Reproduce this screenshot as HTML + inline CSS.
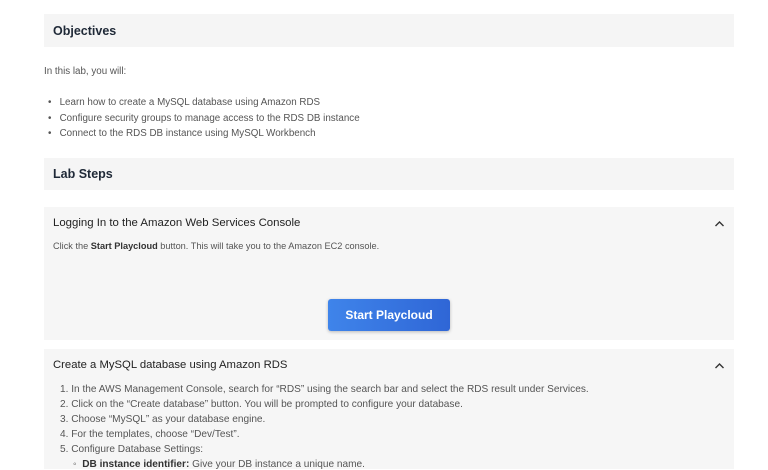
<!DOCTYPE html>
<html><head><style>
body{margin:0;width:768px;height:469px;overflow:hidden;background:#fff;font-family:"Liberation Sans",sans-serif;position:relative}
.a{position:absolute;white-space:nowrap}
.hdr{position:absolute;left:44px;width:690px;background:#f5f5f5}
.h{font-weight:bold;font-size:12.5px;color:#1f2937}
.t{font-size:9.8px;color:#555}
.p{font-size:10.1px;color:#555}
</style></head><body>
<div class="hdr" style="top:14px;height:33px"></div>
<div class="a h" style="left:53px;top:24px">Objectives</div>
<div class="a t" style="left:44px;top:66px">In this lab, you will:</div>
<div class="a t" style="left:48px;top:97px">•&nbsp;&nbsp;&nbsp;Learn how to create a MySQL database using Amazon RDS</div>
<div class="a t" style="left:48px;top:113px">•&nbsp;&nbsp;&nbsp;Configure security groups to manage access to the RDS DB instance</div>
<div class="a t" style="left:48px;top:128px">•&nbsp;&nbsp;&nbsp;Connect to the RDS DB instance using MySQL Workbench</div>
<div class="hdr" style="top:158px;height:32px"></div>
<div class="a h" style="left:53px;top:167px">Lab Steps</div>
<div class="hdr" style="top:207px;height:133px;background:#f6f6f6"></div>
<div class="a" style="left:53px;top:217px;font-size:11.4px;color:#222">Logging In to the Amazon Web Services Console</div>
<svg class="a" style="left:714px;top:220px" width="11" height="8"><path d="M1.5 6 L5.5 2 L9.5 6" stroke="#333" stroke-width="1.4" fill="none"/></svg>
<div class="a t" style="left:53px;top:241px;font-size:9.2px">Click the <b style="color:#333">Start Playcloud</b> button. This will take you to the Amazon EC2 console.</div>
<div class="a" style="left:328px;top:299px;width:122px;height:32px;border-radius:3px;background:linear-gradient(90deg,#3f84ea,#2f66d6);box-shadow:0 1px 3px rgba(0,0,0,.25);color:#fff;font-weight:bold;font-size:12px;text-align:center;line-height:32px">Start Playcloud</div>
<div class="hdr" style="top:349px;height:120px;background:#f6f6f6"></div>
<div class="a" style="left:53px;top:359px;font-size:11.3px;color:#222">Create a MySQL database using Amazon RDS</div>
<svg class="a" style="left:714px;top:362px" width="11" height="8"><path d="M1.5 6 L5.5 2 L9.5 6" stroke="#333" stroke-width="1.4" fill="none"/></svg>
<div class="a p" style="left:60px;top:384px">1. In the AWS Management Console, search for “RDS” using the search bar and select the RDS result under Services.</div>
<div class="a p" style="left:60px;top:399px">2. Click on the “Create database” button. You will be prompted to configure your database.</div>
<div class="a p" style="left:60px;top:414px">3. Choose “MySQL” as your database engine.</div>
<div class="a p" style="left:60px;top:429px">4. For the templates, choose “Dev/Test”.</div>
<div class="a p" style="left:60px;top:444px">5. Configure Database Settings:</div>
<div class="a p" style="left:73px;top:459px">◦&nbsp;&nbsp;<b style="color:#333">DB instance identifier:</b> Give your DB instance a unique name.</div>
</body></html>
